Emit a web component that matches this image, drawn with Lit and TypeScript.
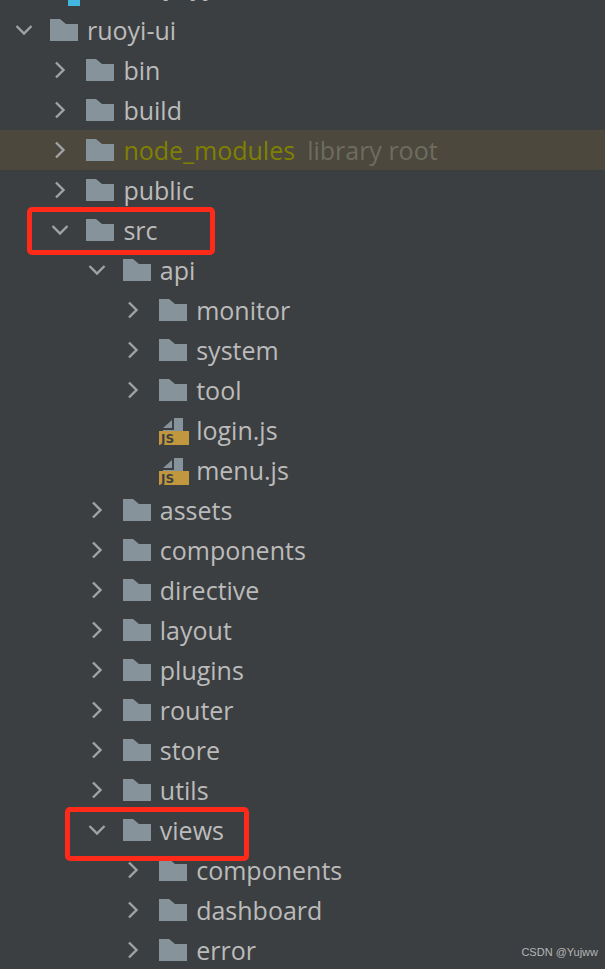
import {css, html, LitElement, nothing} from 'lit';
import {customElement} from 'lit/decorators.js';

type Node = {
  depth: number;
  name: string;
  kind?: 'dir' | 'js';
  open?: boolean;
  hint?: string;
};

const TREE: Node[] = [
  {depth: 0, name: 'ruoyi-ui', open: true},
  {depth: 1, name: 'bin'},
  {depth: 1, name: 'build'},
  {depth: 1, name: 'node_modules', hint: 'library root'},
  {depth: 1, name: 'public'},
  {depth: 1, name: 'src', open: true},
  {depth: 2, name: 'api', open: true},
  {depth: 3, name: 'monitor'},
  {depth: 3, name: 'system'},
  {depth: 3, name: 'tool'},
  {depth: 3, name: 'login.js', kind: 'js'},
  {depth: 3, name: 'menu.js', kind: 'js'},
  {depth: 2, name: 'assets'},
  {depth: 2, name: 'components'},
  {depth: 2, name: 'directive'},
  {depth: 2, name: 'layout'},
  {depth: 2, name: 'plugins'},
  {depth: 2, name: 'router'},
  {depth: 2, name: 'store'},
  {depth: 2, name: 'utils'},
  {depth: 2, name: 'views', open: true},
  {depth: 3, name: 'components'},
  {depth: 3, name: 'dashboard'},
  {depth: 3, name: 'error'},
];

const chevron = (open?: boolean) =>
  open
    ? html`<svg class="chev" width="20" height="20" viewBox="0 0 20 20"><path d="M2.5 6 L10 13.5 L17.5 6" /></svg>`
    : html`<svg class="chev" width="20" height="20" viewBox="0 0 20 20"><path d="M6 2.5 L13.5 10 L6 17.5" /></svg>`;

const folder = html`<svg class="icon" width="28" height="22" viewBox="0 0 28 22"><path d="M0 0 H10 L16 5 H28 V22 H0 Z" fill="#87939a" /></svg>`;

const jsFile = html`<svg class="icon js" width="30" height="30" viewBox="0 0 30 30">
  <path d="M4 13 L13 5 V13 Z M15 3 H24 V16 H4 V15 H15 Z" fill="#87939a" />
  <rect x="0" y="16" width="30" height="14" fill="#c0963f" />
  <text x="2" y="27.5" class="js-label">JS</text>
</svg>`;

@customElement('app-root')
export class AppRoot extends LitElement {
  static styles = css`
    :host {
      display: block;
      position: relative;
      width: 605px;
      height: 969px;
      overflow: hidden;
      background: #3c3f41;
      font-family: 'Open Sans', 'Noto Sans', sans-serif;
      font-size: 25px;
      color: #bbbbbb;
    }

    .tree {
      display: flex;
      flex-direction: column;
      padding-top: 10px;
    }

    .row {
      display: flex;
      align-items: center;
      height: 40px;
      flex: none;
      white-space: nowrap;
    }

    .row.library {
      background: #4c483e;
    }

    .row.library .name {
      color: #808000;
    }

    .slot {
      flex: none;
      width: 20px;
      height: 20px;
      margin-right: 16px;
    }

    .chev {
      display: block;
      fill: none;
      stroke: #a0a3a5;
      stroke-width: 2.4;
    }

    .icon {
      display: block;
      flex: none;
      margin-right: 9px;
    }

    .icon.js {
      margin-right: 7px;
    }

    .js-label {
      font-family: 'DejaVu Sans', sans-serif;
      font-size: 12px;
      font-weight: 700;
      fill: #3c3f41;
    }

    .hint {
      margin-left: 12px;
      color: #6d6d5f;
    }

    .clipped {
      position: absolute;
      left: 68px;
      top: 0;
      width: 12px;
      height: 6px;
      background: #40b6e0;
    }

    .clipped-name {
      position: absolute;
      left: 123px;
      top: -35px;
      line-height: 40px;
    }

    .mark {
      position: absolute;
      border: 5px solid #ff2a1a;
      border-radius: 5px;
      box-sizing: border-box;
    }

    .mark.src {
      left: 27px;
      top: 207px;
      width: 188px;
      height: 48px;
    }

    .mark.views {
      left: 65px;
      top: 807px;
      width: 184px;
      height: 54px;
    }

    .watermark {
      position: absolute;
      right: 7px;
      bottom: 11px;
      font-family: 'Liberation Sans', sans-serif;
      font-size: 11px;
      color: #b4b6b7;
    }
  `;

  private renderRow(node: Node) {
    return html`
      <div class="row ${node.hint ? 'library' : ''}" style="padding-left: ${14 + (node.depth) * 36.4}px">
        <div class="slot">${node.kind === 'js' ? nothing : chevron(node.open)}</div>
        ${node.kind === 'js' ? jsFile : folder}
        <span class="name">${node.name}</span>
        ${node.hint ? html`<span class="hint">${node.hint}</span>` : nothing}
      </div>
    `;
  }

  render() {
    return html`
      <div class="clipped"></div>
      <div class="clipped-name">ruoyi-yy</div>
      <div class="tree">${TREE.map((n) => this.renderRow(n))}</div>
      <div class="mark src"></div>
      <div class="mark views"></div>
      <div class="watermark">CSDN @Yujww</div>
    `;
  }
}
